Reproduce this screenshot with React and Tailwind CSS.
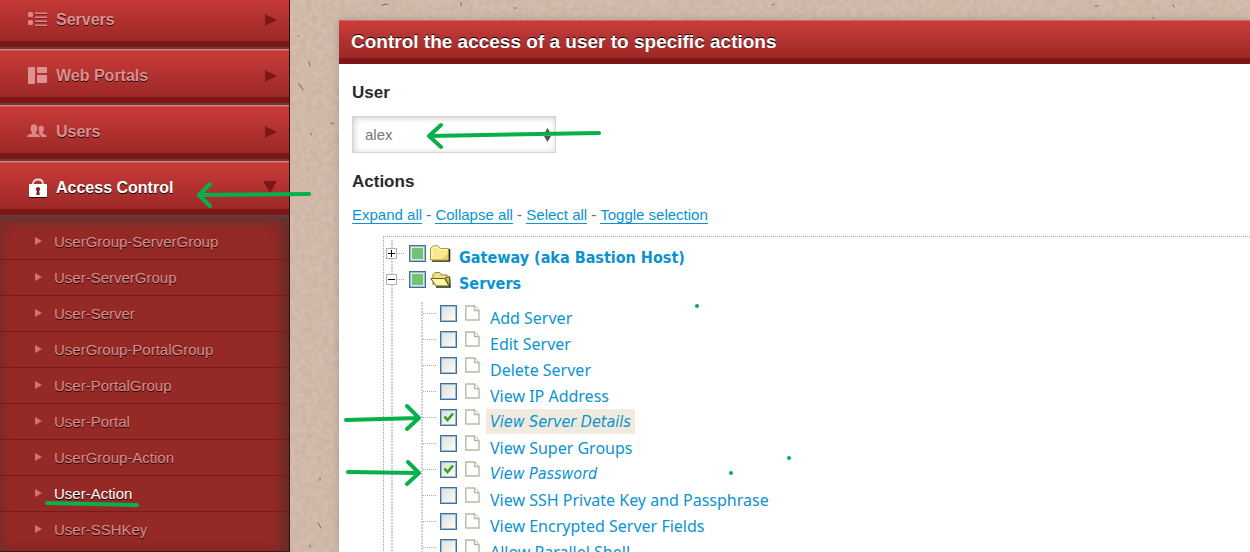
import { useState } from 'react';

/* ── Data ── */
const MENU = [
    { label: 'Servers', icon: ListIcon },
    { label: 'Web Portals', icon: PortalIcon },
    { label: 'Users', icon: UsersIcon },
    { label: 'Access Control', icon: LockIcon, open: true },
];

const SUBMENU = [
    'UserGroup-ServerGroup',
    'User-ServerGroup',
    'User-Server',
    'UserGroup-PortalGroup',
    'User-PortalGroup',
    'User-Portal',
    'UserGroup-Action',
    'User-Action',
    'User-SSHKey',
];

const LINKS = ['Expand all', 'Collapse all', 'Select all', 'Toggle selection'];

const SERVER_ACTIONS = [
    'Add Server',
    'Edit Server',
    'Delete Server',
    'View IP Address',
    'View Server Details',
    'View Super Groups',
    'View Password',
    'View SSH Private Key and Passphrase',
    'View Encrypted Server Fields',
    'Allow Parallel Shell',
];

/* ── Icons ── */
function ListIcon() {
    return (
        <svg width="20" height="18" viewBox="0 0 20 18">
            <path d="M7 3h12v1H7zM7 7h12v1H7zM7 11h12v1H7zM7 15h12v1H7z" fill="#7a2422" />
            <g fill="#d98987">
                <rect y="1" width="5" height="5" rx="1.500" />
                <rect y="9" width="5" height="5" rx="1.500" />
                <path d="M7 1.500h12v1.500H7zM7 5.500h12V7H7zM7 9.500h12V11H7zM7 13.500h12V15H7z" />
            </g>
        </svg>
    );
}

function PortalIcon() {
    return (
        <svg width="20" height="18" viewBox="0 0 20 18" fill="#dd9190">
            <rect y="0" width="7" height="17" rx="1" />
            <rect x="9" y="0" width="10" height="6" rx="1" />
            <rect x="9" y="8" width="10" height="8" rx="1" />
        </svg>
    );
}

function UsersIcon() {
    return (
        <svg width="20" height="18" viewBox="0 0 20 18" fill="#d98987" className="overflow-visible">
            <path d="M-1 14c0-2 1.500-2.300 5-3.400V9.500C2.800 8.500 2.500 6.500 2.600 4.800 2.800 2.700 4.100 1.200 6 1.200s3.200 1.500 3.400 3.600c.1 1.700-.3 3.700-1.600 4.700v1.100c3 1.100 4.200 1.600 4.200 3.400z" />
            <path d="M10.800 4c.6-1 1.400-1.300 2.400-1.300 1.700 0 2.700 1.200 2.700 3 0 1.300-.4 2.700-1.300 3.500v1.300c2.400.7 3.900 1.300 3.900 3.500h-5.300c0-1.800-.9-2.700-2.700-3.600 1-.5 1.300-1.200.6-2-.6-1.200-.6-2.800-.3-4.400z" />
        </svg>
    );
}

function LockIcon() {
    return (
        <svg width="20" height="20" viewBox="0 0 20 20">
            <path d="M5 8V6c0-3 2-4.500 5-4.500S15 3 15 6v2" fill="none" stroke="#e8dada" strokeWidth="1.800" />
            <rect x="1" y="7" width="18" height="13" rx="1" fill="#2b0b0b" />
            <rect x="1" y="6" width="18" height="13" rx="1" fill="#fff" />
            <path d="M10 9a2.200 2.200 0 0 1 1.200 4l.6 4H8.200l.6-4A2.200 2.200 0 0 1 10 9z" fill="#7b2422" />
        </svg>
    );
}

function FolderIcon({ open }) {
    return (
        <svg width="21" height="17" viewBox="0 0 21 17" className="ml-1 shrink-0">
            {open ? (
                <>
                    <path d="M3 14V3.500L5 1.500h4.500L11.500 4H17v3" fill="#efe08a" stroke="#8f8035" />
                    <path d="m19.500 6 .5 10H6" fill="none" stroke="#222" strokeWidth="1.500" />
                    <path d="m15 7 4.500-1.500v9.500z" fill="#c9b860" stroke="#6c5f1c" />
                    <path d="M6 15 .8 7.500h13.700l4.500 7.500z" fill="#fdf5a8" stroke="#6c5f1c" />
                </>
            ) : (
                <>
                    <path d="M19.500 4v12H2" fill="none" stroke="#222" strokeWidth="1.500" />
                    <path d="M.5 15V3.500L3 .8h5L10.500 3.500h8V15z" fill="#f9e98c" stroke="#a9973c" />
                    <path d="M2 14V4.500L3.800 2h3.400l2.500 2.500H17.500" fill="none" stroke="#fffcd8" />
                    <path d="M12 14.500 18 8v6.500z" fill="#eacb5c" />
                </>
            )}
        </svg>
    );
}

function PageIcon() {
    return (
        <svg width="15" height="17" viewBox="0 0 15 17" fill="#fff" stroke="#b9b8a6" className="ml-2 shrink-0">
            <path d="M.8 1h8.700l4.500 4.500v9.500H.8z" strokeWidth="1.400" />
            <path d="M9.500 1v4.500H14" strokeWidth="1.400" />
        </svg>
    );
}

/* ── Sidebar ── */
function Sidebar() {
    return (
        <nav className="-mt-[7px] w-[290px] shrink-0 border-r border-[#2c1010]">
            <ul>
                {MENU.map(({ label, icon: Icon, open }) => (
                    <li key={label}>
                        <button
                            type="button"
                            aria-expanded={!!open}
                            className="flex h-14 w-full items-center border-t border-b-2 border-t-[#e98080] border-b-[#5a4040] bg-linear-to-b from-[#c93b3a] to-[#982724] pr-3 pl-7 text-left shadow-[inset_0_1px_0_#d9504f,inset_0_-6px_0_#7f1716]"
                        >
                            <span className="mb-0.5 flex w-full items-center gap-2">
                                <Icon />
                                <span
                                    className={
                                        open
                                            ? 'flex-1 text-base font-bold text-white [text-shadow:0_1px_0_#000]'
                                            : 'flex-1 text-base font-bold text-[#dd9190] [text-shadow:0_1px_0_#1d0505]'
                                    }
                                >
                                    {label}
                                </span>
                                <svg width="14" height="14" viewBox="0 0 14 14" fill="#7f1716">
                                    {open ? <path d="M0 0h14L7 12z" /> : <path d="M2 1v12l12-6z" />}
                                </svg>
                            </span>
                        </button>
                    </li>
                ))}
            </ul>
            <ul className="border-b border-[#33201f] bg-[#952925] pt-[7px] pb-[3px] shadow-[inset_0_6px_16px_-4px_#5b3a38,inset_-10px_0_16px_-6px_#582a29,inset_6px_0_12px_-8px_#7a2826]">
                {SUBMENU.map((label) => (
                    <li key={label} className="border-b border-[#7c1817] last:border-transparent">
                        <a
                            href="#"
                            className={
                                label === 'User-Action'
                                    ? 'flex h-[35px] items-center gap-3 pt-0.5 pl-[35px] text-[15px] text-white [text-shadow:0_1px_0_#000]'
                                    : 'flex h-[35px] items-center gap-3 pt-0.5 pl-[35px] text-[15px] text-[#d98f8d] [text-shadow:0_1px_0_#1d0505]'
                            }
                        >
                            <svg width="7" height="11" viewBox="0 0 7 11" fill="#d07573">
                                <path d="M0 0v8l7-4z" />
                            </svg>
                            {label}
                        </a>
                    </li>
                ))}
            </ul>
        </nav>
    );
}

/* ── Action tree ── */
function GroupRow({ id, label, open }) {
    return (
        <div className="flex h-[26px] items-start">
            <button
                type="button"
                aria-label={open ? 'Collapse' : 'Expand'}
                className="mt-[3px] ml-0.5 flex size-[11px] shrink-0 items-center justify-center border border-[#b4b4a8] bg-white"
            >
                <svg width="7" height="7" viewBox="0 0 7 7" fill="#000">
                    <path d="M0 3h7v1H0z" />
                    {!open && <path d="M3 0h1v7H3z" />}
                </svg>
            </button>
            <span className="mt-2 mr-[5px] w-[7px] border-t border-dotted border-[#a8a8a8]" />
            <input
                id={id}
                type="checkbox"
                className="size-[17px] shrink-0 appearance-none border border-[#3f709f] bg-[#73c373] shadow-[inset_0_0_0_1px_#9dbad3,inset_0_0_0_2px_#dcebdc]"
            />
            <FolderIcon open={open} />
            <label
                htmlFor={id}
                className="ml-2 font-['DejaVu_Sans_Condensed',sans-serif] text-base leading-[26px] font-bold whitespace-nowrap text-[#0a93d0]"
            >
                {label}
            </label>
        </div>
    );
}

function ActionRow({ id, label, checked, onToggle, highlighted }) {
    return (
        <li className="flex h-[26px] items-start">
            <span className="mt-2 mr-1 w-[13px] border-t border-dotted border-[#a8a8a8]" />
            <span className="relative flex">
                <input
                    id={id}
                    type="checkbox"
                    checked={checked}
                    onChange={onToggle}
                    className="size-[17px] shrink-0 appearance-none border border-[#3f709f] bg-linear-to-br from-[#dcdcd8] to-white shadow-[inset_0_0_0_1px_#9dbad3]"
                />
                {checked && (
                    <svg
                        width="17"
                        height="17"
                        viewBox="0 0 17 17"
                        className="pointer-events-none absolute inset-0"
                        fill="none"
                        stroke="#2da51f"
                        strokeWidth="2.600"
                    >
                        <path d="m4.500 7.500 3 3.500 5.500-6.500" />
                    </svg>
                )}
            </span>
            <PageIcon />
            <label
                htmlFor={id}
                className={
                    'ml-[6px] h-[25px] px-1 text-base leading-[26px] whitespace-nowrap text-[#0a93d0]' +
                    (checked ? " font-['DejaVu_Sans_Condensed',sans-serif] italic" : '') +
                    (highlighted ? ' bg-[#f0ebde]' : '')
                }
            >
                {label}
            </label>
        </li>
    );
}

function ActionTree() {
    const [checked, setChecked] = useState(['View Server Details', 'View Password']);

    const toggle = (name) =>
        setChecked((list) => (list.includes(name) ? list.filter((n) => n !== name) : [...list, name]));

    return (
        <ul className="mt-[11px] -mr-[13px] ml-[31px] border-t border-l border-dotted border-[#a0a0a0] bg-[repeating-linear-gradient(to_bottom,#d0d0d0_0_2px,transparent_2px_3px)] bg-[length:2px_100%] bg-[position:7px_3px] bg-no-repeat pt-2 font-['Noto_Sans',sans-serif]">
            <li>
                <GroupRow id="gateway" label="Gateway (aka Bastion Host)" />
            </li>
            <li>
                <GroupRow id="servers" label="Servers" open />
                <ul className="mt-[5px] ml-[37px] bg-[repeating-linear-gradient(to_bottom,#d0d0d0_0_2px,transparent_2px_3px)] bg-[length:2px_100%] bg-no-repeat pt-[3px] pl-0.5">
                    {SERVER_ACTIONS.map((name) => (
                        <ActionRow
                            key={name}
                            id={name.toLowerCase().replaceAll(' ', '-')}
                            label={name}
                            checked={checked.includes(name)}
                            onToggle={() => toggle(name)}
                            highlighted={name === 'View Server Details'}
                        />
                    ))}
                </ul>
            </li>
        </ul>
    );
}

/* ── Paper texture behind the panel ── */
function Paper() {
    return (
        <svg className="absolute inset-0 size-full" aria-hidden="true">
            <filter id="grain">
                <feTurbulence type="fractalNoise" baseFrequency="0.18" numOctaves="3" seed="4" />
                <feColorMatrix values="0 0 0 0 .42  0 0 0 0 .33  0 0 0 0 .26  .55 0 0 0 -.15" />
            </filter>
            <rect width="100%" height="100%" filter="url(#grain)" />
            <g fill="none" stroke="#7d6454" strokeLinecap="round">
                <path d="m19 62 1 4M9 84l4 6M21 133v2M41 123l3 1M30 478v2M28 523l3 5M20 545v2M8 36h1" />
                <path d="M92 5l6-1M171 3v3M224 8h2M482 5l2-1M805 6h3M883 5l1 2M862 18h2" />
            </g>
        </svg>
    );
}

/* ── Hand-drawn marks ── */
function Annotations() {
    return (
        <svg
            width="1250"
            height="552"
            viewBox="0 0 1250 552"
            className="pointer-events-none absolute top-0 left-0"
            fill="none"
            stroke="#08b04b"
            strokeWidth="4"
            strokeLinecap="round"
            strokeLinejoin="round"
            aria-hidden="true"
        >
            <path d="M309 194 200 195M210 184l-11 11 11 11" />
            <path d="M599 133 430 136M441 125l-12 11 12 11" />
            <path d="m346 420 72-2M407 406l12 12-12 11" />
            <path d="m348 472 70 1M408 462l11 11-12 11" />
            <path d="m47 503 90 2" />
            <g fill="#08b04b" stroke="none">
                <circle cx="697" cy="306" r="2" />
                <circle cx="789" cy="458" r="2" />
                <circle cx="731" cy="473" r="2" />
            </g>
        </svg>
    );
}

export default function App() {
    const [user, setUser] = useState('alex');

    return (
        <div className="relative flex h-screen overflow-hidden bg-[#d6bdad] font-['Liberation_Sans',Arial,sans-serif]">
            <Sidebar />
            <div className="relative flex min-w-0 flex-1">
                <Paper />
                <main className="relative mt-5 ml-[49px] min-w-0 flex-1 bg-white shadow-[0_0_8px_rgba(120,130,130,0.5)]">
                    <h1 className="h-11 bg-linear-to-b from-[#cb3d3c] to-[#942522] pl-3 text-[19px] leading-[44px] font-bold text-white shadow-[inset_0_1px_0_#d96361,inset_0_-6px_0_#7f1716] [text-shadow:0_-1px_0_#000]">
                        Control the access of a user to specific actions
                    </h1>

                    <div className="px-[13px] pt-[17px]">
                        <label htmlFor="user" className="block text-[17px] leading-6 font-bold text-[#2a2a2a]">
                            User
                        </label>
                        <div className="relative mt-[11px] w-[204px]">
                            <select
                                id="user"
                                value={user}
                                onChange={(e) => setUser(e.target.value)}
                                className="h-[37px] w-full appearance-none border border-[#d4d4d4] bg-white px-3 pt-0.5 text-[15px] text-[#777] shadow-[inset_1px_1px_6px_#ccc]"
                            >
                                <option>alex</option>
                            </select>
                            <svg
                                width="7"
                                height="14"
                                viewBox="0 0 7 14"
                                fill="#555"
                                className="pointer-events-none absolute top-3 right-[5px]"
                            >
                                <path d="m3.500 0 3.500 6H0zM3.500 14 7 8H0z" />
                            </svg>
                        </div>

                        <h2 className="mt-[17px] text-[17px] leading-6 font-bold text-[#2a2a2a]">Actions</h2>
                        <p className="mt-[11px] text-[15px] leading-5 text-[#666]">
                            {LINKS.map((label, i) => (
                                <span key={label}>
                                    {i > 0 && ' - '}
                                    <a href="#" className="border-b border-[#0a93d0] text-[#0a93d0]">
                                        {label}
                                    </a>
                                </span>
                            ))}
                        </p>
                        <ActionTree />
                    </div>
                </main>
            </div>
            <Annotations />
        </div>
    );
}
